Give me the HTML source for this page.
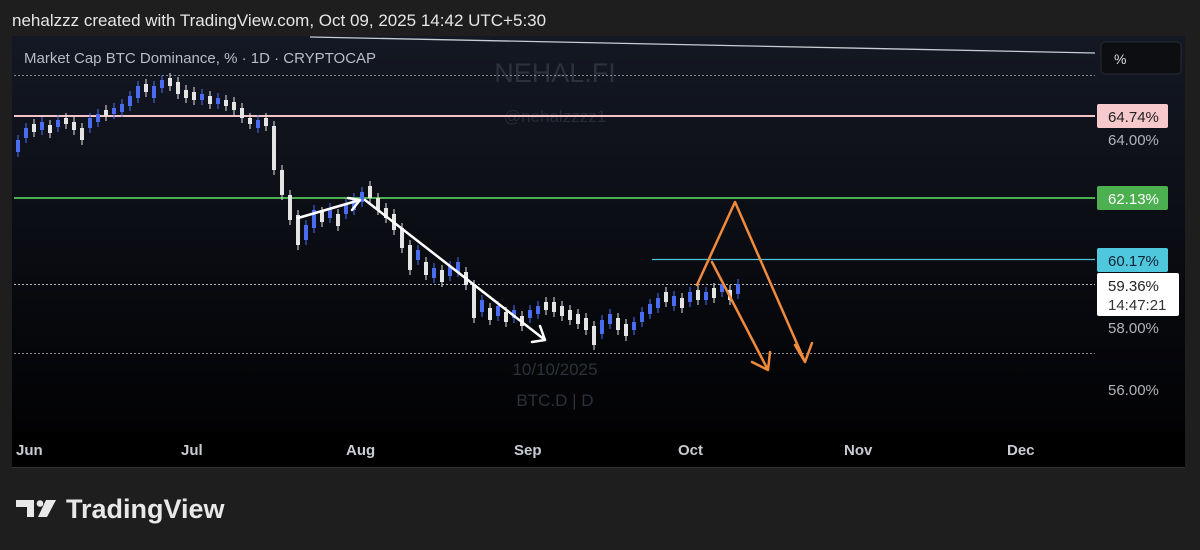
<!DOCTYPE html>
<html><head><meta charset="utf-8"><style>
body{margin:0;width:1200px;height:550px;background:#1e1e1e;overflow:hidden;font-family:"Liberation Sans",sans-serif}
</style></head><body>
<svg width="1200" height="550" xmlns="http://www.w3.org/2000/svg" style="position:absolute;left:0;top:0">
<defs><linearGradient id="g" x1="0" y1="0" x2="0" y2="1"><stop offset="0" stop-color="#141824"/><stop offset="1" stop-color="#020203"/></linearGradient></defs>
<text x="12" y="26" fill="#e6e6e6" font-size="17">nehalzzz created with TradingView.com, Oct 09, 2025 14:42 UTC+5:30</text>
<rect x="12" y="36" width="1173" height="396" fill="url(#g)"/>
<rect x="12" y="432" width="1173" height="35" fill="#000"/>
<line x1="12" y1="467.5" x2="1185" y2="467.5" stroke="#333"/>
<text x="24" y="63" fill="#b8bcc6" font-size="15">Market Cap BTC Dominance, % · 1D · CRYPTOCAP</text>
<text x="555" y="82" fill="#2c313c" font-size="27" text-anchor="middle">NEHAL.FI</text>
<text x="555" y="122" fill="#262b35" font-size="17" text-anchor="middle">@nehalzzzz1</text>
<text x="555" y="375" fill="#2c313c" font-size="17" text-anchor="middle">10/10/2025</text>
<text x="555" y="406" fill="#2c313c" font-size="17" text-anchor="middle">BTC.D | D</text>
<line x1="310" y1="37" x2="1095" y2="53" stroke="#c8ccd4" stroke-width="1.3"/>
<line x1="14" y1="75.5" x2="1095" y2="75.5" stroke="#888" stroke-dasharray="2 2"/>
<line x1="14" y1="284.5" x2="1095" y2="284.5" stroke="#bbb" stroke-dasharray="2 2"/>
<line x1="14" y1="353.5" x2="1095" y2="353.5" stroke="#888" stroke-dasharray="2 2"/>
<line x1="14" y1="116" x2="1095" y2="116" stroke="#f4c3c6" stroke-width="2"/>
<line x1="14" y1="198" x2="1095" y2="198" stroke="#4caf50" stroke-width="2"/>
<line x1="652" y1="259.5" x2="1095" y2="259.5" stroke="#4fc3d9" stroke-width="1.3"/>
<!-- blue candles -->
<path fill="none" stroke="#4a6cf0" stroke-width="1" d="M18 135v22M26 123v20M42 117v18M58 115v17M90 113v20M98 109v18M114 103v16M122 99v18M130 91v20M138 81v22M154 81v22M162 75v18M202 89v16M218 93v16M258 115v18M306 220v25M314 205v28M330 203v20M346 199v20M354 193v22M362 187v20M418 245v20M434 263v20M450 261v20M458 257v20M482 295v22M498 301v20M514 305v18M530 305v18M538 301v18M602 315v24M610 309v20M634 317v18M642 307v20M650 299v20M658 293v20M674 291v20M690 287v20M706 287v18M722 279v18M738 279v20"/>
<path fill="#4a6cf0" d="M16 140h4v12h-4zM24 128h4v10h-4zM40 122h4v8h-4zM56 120h4v7h-4zM88 118h4v10h-4zM96 114h4v8h-4zM112 108h4v6h-4zM120 104h4v8h-4zM128 96h4v10h-4zM136 86h4v12h-4zM152 86h4v12h-4zM160 80h4v8h-4zM200 94h4v6h-4zM216 98h4v6h-4zM256 120h4v8h-4zM304 225h4v15h-4zM312 210h4v18h-4zM328 208h4v10h-4zM344 204h4v10h-4zM352 198h4v12h-4zM360 192h4v10h-4zM416 250h4v10h-4zM432 268h4v10h-4zM448 266h4v10h-4zM456 262h4v10h-4zM480 300h4v12h-4zM496 306h4v10h-4zM512 310h4v8h-4zM528 310h4v8h-4zM536 306h4v8h-4zM600 320h4v14h-4zM608 314h4v10h-4zM632 322h4v8h-4zM640 312h4v10h-4zM648 304h4v10h-4zM656 298h4v10h-4zM672 296h4v10h-4zM688 292h4v10h-4zM704 292h4v8h-4zM720 284h4v8h-4zM736 284h4v10h-4z"/>
<!-- white candles -->
<path fill="none" stroke="#e4e4e4" stroke-width="1" d="M34 119v18M50 120v18M66 113v16M74 117v18M82 123v22M106 105v16M146 79v18M170 73v18M178 77v22M186 85v18M194 87v18M210 91v18M226 95v16M234 97v18M242 103v20M250 113v16M266 113v18M274 121v54M282 165v35M290 190v35M298 210v40M322 207v20M338 209v22M370 181v22M378 193v22M386 203v20M394 209v26M402 223v30M410 240v35M426 257v23M442 265v22M466 267v23M474 280v43M490 303v22M506 307v20M522 311v20M546 297v18M554 297v20M562 301v20M570 305v20M578 309v20M586 313v22M594 321v29M618 313v22M626 319v22M666 287v20M682 293v20M698 285v20M714 283v20M730 285v20"/>
<path fill="#e4e4e4" d="M32 124h4v8h-4zM48 125h4v8h-4zM64 118h4v6h-4zM72 122h4v8h-4zM80 128h4v12h-4zM104 110h4v6h-4zM144 84h4v8h-4zM168 78h4v8h-4zM176 82h4v12h-4zM184 90h4v8h-4zM192 92h4v8h-4zM208 96h4v8h-4zM224 100h4v6h-4zM232 102h4v8h-4zM240 108h4v10h-4zM248 118h4v6h-4zM264 118h4v8h-4zM272 126h4v44h-4zM280 170h4v25h-4zM288 195h4v25h-4zM296 215h4v30h-4zM320 212h4v10h-4zM336 214h4v12h-4zM368 186h4v12h-4zM376 198h4v12h-4zM384 208h4v10h-4zM392 214h4v16h-4zM400 228h4v20h-4zM408 245h4v25h-4zM424 262h4v13h-4zM440 270h4v12h-4zM464 272h4v13h-4zM472 285h4v33h-4zM488 308h4v12h-4zM504 312h4v10h-4zM520 316h4v10h-4zM544 302h4v8h-4zM552 302h4v10h-4zM560 306h4v10h-4zM568 310h4v10h-4zM576 314h4v10h-4zM584 318h4v12h-4zM592 326h4v19h-4zM616 318h4v12h-4zM624 324h4v12h-4zM664 292h4v10h-4zM680 298h4v10h-4zM696 290h4v10h-4zM712 288h4v10h-4zM728 290h4v10h-4z"/>
<g fill="none" stroke="#fff" stroke-width="2.5" stroke-linecap="round" stroke-linejoin="round">
<path d="M298 218L360 200M348 198L360 200L352 210"/>
<path d="M365 200L545 340M532 342L545 340L540 326"/>
</g>
<g fill="none" stroke="#f08a3c" stroke-width="2.5" stroke-linecap="round" stroke-linejoin="round">
<path d="M697 285L735 202L805 362M795 345L805 362L812 343"/>
<path d="M712 262L768 370M752 362L768 370L770 352"/>
</g>
<rect x="1101" y="42" width="80" height="32" rx="4" fill="#0d0e12" stroke="#2a2c33"/>
<text x="1114" y="64" fill="#ddd" font-size="14">%</text>
<rect x="1097" y="104" width="71" height="24" rx="2" fill="#f7c9cc"/>
<text x="1108" y="122" fill="#222" font-size="15">64.74%</text>
<text x="1108" y="145" fill="#b0b3ba" font-size="15">64.00%</text>
<rect x="1097" y="186" width="71" height="24" rx="2" fill="#4caf50"/>
<text x="1108" y="204" fill="#fff" font-size="15">62.13%</text>
<rect x="1097" y="248" width="71" height="24" rx="2" fill="#4fc8de"/>
<text x="1108" y="266" fill="#123" font-size="15">60.17%</text>
<rect x="1097" y="273" width="82" height="43" rx="2" fill="#fff"/>
<text x="1108" y="291" fill="#222" font-size="15">59.36%</text>
<text x="1108" y="310" fill="#333" font-size="15">14:47:21</text>
<text x="1108" y="333" fill="#b0b3ba" font-size="15">58.00%</text>
<text x="1108" y="395" fill="#b0b3ba" font-size="15">56.00%</text>
<g fill="#c8ccd4" font-size="15" font-weight="bold">
<text x="16" y="455">Jun</text><text x="181" y="455">Jul</text><text x="346" y="455">Aug</text><text x="514" y="455">Sep</text><text x="678" y="455">Oct</text><text x="844" y="455">Nov</text><text x="1007" y="455">Dec</text>
</g>
<g fill="#e8e8e8">
<path d="M16 500H34V517H27V507H16Z"/><circle cx="40" cy="503.5" r="3.3"/><path d="M46 500H56L47 517H38Z"/>
</g>
<text x="66" y="518" fill="#e8e8e8" font-size="27" font-weight="bold">TradingView</text>
</svg>
</body></html>
